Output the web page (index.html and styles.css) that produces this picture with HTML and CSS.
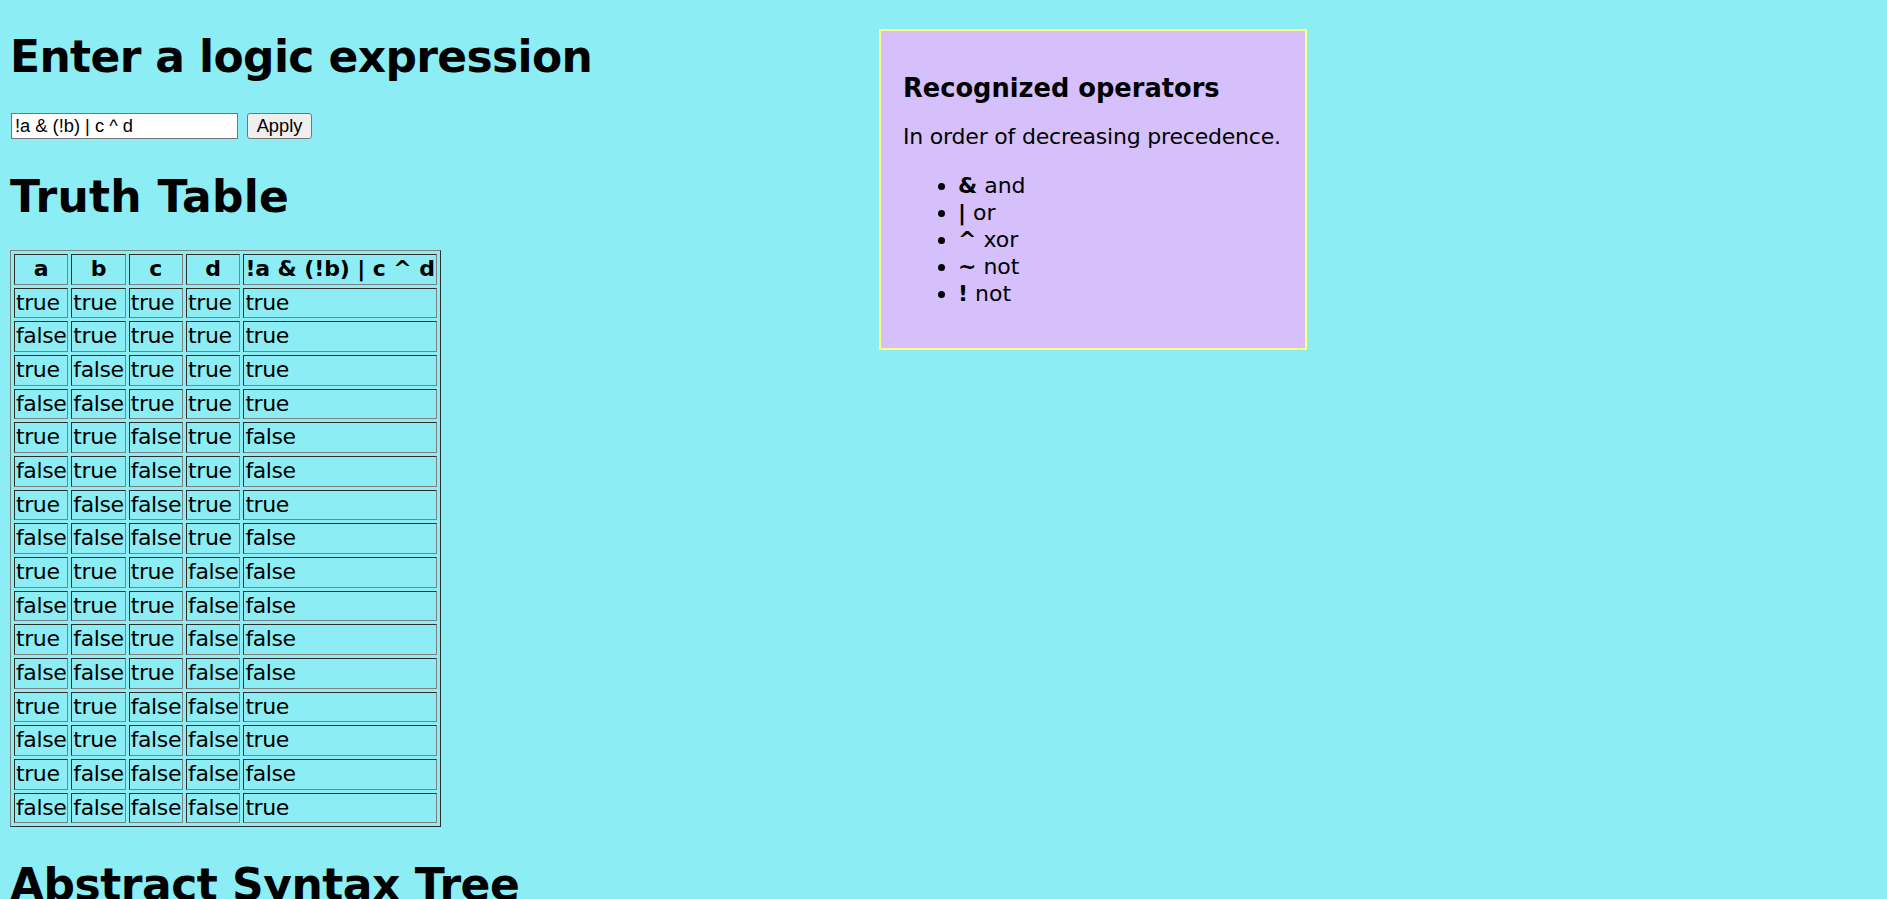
FILE: index.html
```html
<!DOCTYPE html>
<html lang="en">
<head>
<meta charset="utf-8">
<title>Logic expression</title>
<link rel="stylesheet" href="styles.css">
</head>
<body>
<div class="page">
  <main class="main">
    <h1 class="title title-first">Enter a logic expression</h1>
    <form class="expr-form" onsubmit="return false;">
      <input class="expr-input" type="text" value="!a &amp; (!b) | c ^ d">
      <button class="apply-btn" type="submit">Apply</button>
    </form>
    <h1 class="title title-table">Truth Table</h1>
    <table class="truth">
      <thead>
        <tr><th>a</th><th>b</th><th>c</th><th>d</th><th>!a &amp; (!b) | c ^ d</th></tr>
      </thead>
      <tbody>
        <tr><td>true</td><td>true</td><td>true</td><td>true</td><td>true</td></tr>
        <tr><td>false</td><td>true</td><td>true</td><td>true</td><td>true</td></tr>
        <tr><td>true</td><td>false</td><td>true</td><td>true</td><td>true</td></tr>
        <tr><td>false</td><td>false</td><td>true</td><td>true</td><td>true</td></tr>
        <tr><td>true</td><td>true</td><td>false</td><td>true</td><td>false</td></tr>
        <tr><td>false</td><td>true</td><td>false</td><td>true</td><td>false</td></tr>
        <tr><td>true</td><td>false</td><td>false</td><td>true</td><td>true</td></tr>
        <tr><td>false</td><td>false</td><td>false</td><td>true</td><td>false</td></tr>
        <tr><td>true</td><td>true</td><td>true</td><td>false</td><td>false</td></tr>
        <tr><td>false</td><td>true</td><td>true</td><td>false</td><td>false</td></tr>
        <tr><td>true</td><td>false</td><td>true</td><td>false</td><td>false</td></tr>
        <tr><td>false</td><td>false</td><td>true</td><td>false</td><td>false</td></tr>
        <tr><td>true</td><td>true</td><td>false</td><td>false</td><td>true</td></tr>
        <tr><td>false</td><td>true</td><td>false</td><td>false</td><td>true</td></tr>
        <tr><td>true</td><td>false</td><td>false</td><td>false</td><td>false</td></tr>
        <tr><td>false</td><td>false</td><td>false</td><td>false</td><td>true</td></tr>
      </tbody>
    </table>
    <h1 class="title title-ast">Abstract Syntax Tree</h1>
  </main>
  <aside class="ops">
    <h3 class="ops-title">Recognized operators</h3>
    <p class="ops-note">In order of decreasing precedence.</p>
    <ul class="ops-list">
      <li><b>&amp;</b> and</li>
      <li><b>|</b> or</li>
      <li><b>^</b> xor</li>
      <li><b>~</b> not</li>
      <li><b>!</b> not</li>
    </ul>
  </aside>
</div>
</body>
</html>
```

FILE: styles.css
```css
html {
  scrollbar-width: none;
  background: #8ceef4;
}
body {
  margin: 0;
  background: #8ceef4;
  color: #000;
  font-family: "DejaVu Sans", Verdana, sans-serif;
  font-size: 22px;
}
.page {
  display: flex;
  align-items: flex-start;
  padding: 0 0 0 10px;
}
.main {
  flex: none;
  width: 869px;
}
.title {
  font-size: 44px;
  line-height: 52px;
  font-weight: bold;
  margin: 0;
}
.title-first {
  margin-top: 31px;
  letter-spacing: -0.65px;
}
.title-table {
  margin-top: 32px;
  letter-spacing: 0.25px;
}
.title-ast {
  margin-top: 32px;
  letter-spacing: -0.5px;
}

.expr-form {
  display: flex;
  align-items: center;
  gap: 9px;
  margin: 30px 0 0 1px;
  height: 26px;
}
.expr-input {
  box-sizing: border-box;
  width: 227px;
  height: 26px;
  margin: 0;
  padding: 0 3px;
  border: 1px solid #767676;
  background: #fff;
  font-family: "Liberation Sans", Arial, sans-serif;
  font-size: 18.3px;
  color: #000;
}
.apply-btn {
  box-sizing: border-box;
  width: 65px;
  height: 26px;
  margin: 0;
  padding: 0;
  border: 1px solid #767676;
  border-radius: 3px;
  background: #efefef;
  font-family: "Liberation Sans", Arial, sans-serif;
  font-size: 18.3px;
  color: #000;
}

.truth {
  margin-top: 27px;
  border-collapse: separate;
  border-spacing: 3px;
  border: 1px solid;
  border-color: #808080 #2e2e2e #2e2e2e #808080;
}
.truth th,
.truth td {
  padding: 1px;
  line-height: 26.67px;
  border: 1px solid;
  border-color: #2e2e2e #808080 #808080 #2e2e2e;
  text-align: left;
  white-space: nowrap;
}
.truth td {
  letter-spacing: -0.4px;
}
.truth th {
  text-align: center;
  font-weight: bold;
}
.truth th:last-child {
  letter-spacing: -0.1px;
}

.ops {
  flex: none;
  box-sizing: border-box;
  width: 428px;
  margin-top: 29px;
  padding: 22px 22px 19px 22px;
  border: 2px solid #ffff80;
  background: #d5c0fb;
  line-height: 27px;
}
.ops-title {
  margin: 20px 0 0;
  font-size: 25.7px;
  line-height: 30px;
  font-weight: bold;
}
.ops-note {
  margin: 20px 0 0;
  letter-spacing: -0.2px;
  white-space: nowrap;
}
.ops-list {
  margin: 22px 0 22px;
  padding-left: 55px;
}
```
